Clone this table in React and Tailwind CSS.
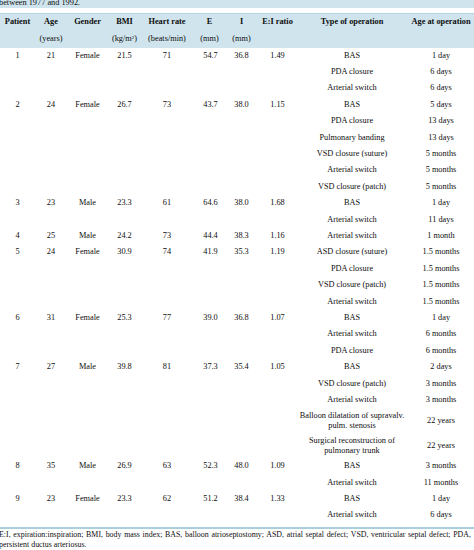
const patients = [
  { id: "1", age: "21", gender: "Female", bmi: "21.5", hr: "71", e: "54.7", i: "36.8", ratio: "1.49",
    ops: [["BAS", "1 day"], ["PDA closure", "6 days"], ["Arterial switch", "6 days"]] },
  { id: "2", age: "24", gender: "Female", bmi: "26.7", hr: "73", e: "43.7", i: "38.0", ratio: "1.15",
    ops: [["BAS", "5 days"], ["PDA closure", "13 days"], ["Pulmonary banding", "13 days"],
      ["VSD closure (suture)", "5 months"], ["Arterial switch", "5 months"], ["VSD closure (patch)", "5 months"]] },
  { id: "3", age: "23", gender: "Male", bmi: "23.3", hr: "61", e: "64.6", i: "38.0", ratio: "1.68",
    ops: [["BAS", "1 day"], ["Arterial switch", "11 days"]] },
  { id: "4", age: "25", gender: "Male", bmi: "24.2", hr: "73", e: "44.4", i: "38.3", ratio: "1.16",
    ops: [["Arterial switch", "1 month"]] },
  { id: "5", age: "24", gender: "Female", bmi: "30.9", hr: "74", e: "41.9", i: "35.3", ratio: "1.19",
    ops: [["ASD closure (suture)", "1.5 months"], ["PDA closure", "1.5 months"],
      ["VSD closure (patch)", "1.5 months"], ["Arterial switch", "1.5 months"]] },
  { id: "6", age: "31", gender: "Female", bmi: "25.3", hr: "77", e: "39.0", i: "36.8", ratio: "1.07",
    ops: [["BAS", "1 day"], ["Arterial switch", "6 months"], ["PDA closure", "6 months"]] },
  { id: "7", age: "27", gender: "Male", bmi: "39.8", hr: "81", e: "37.3", i: "35.4", ratio: "1.05",
    ops: [["BAS", "2 days"], ["VSD closure (patch)", "3 months"], ["Arterial switch", "3 months"],
      [["Balloon dilatation of supravalv.", "pulm. stenosis"], "22 years"],
      [["Surgical reconstruction of", "pulmonary trunk"], "22 years"]] },
  { id: "8", age: "35", gender: "Male", bmi: "26.9", hr: "63", e: "52.3", i: "48.0", ratio: "1.09",
    ops: [["BAS", "3 months"], ["Arterial switch", "11 months"]] },
  { id: "9", age: "23", gender: "Female", bmi: "23.3", hr: "62", e: "51.2", i: "38.4", ratio: "1.33",
    ops: [["BAS", "1 day"], ["Arterial switch", "6 days"]] },
];

const cell = "p-0 text-center align-middle whitespace-nowrap";

export default function App() {
  const rows = [];
  patients.forEach((p) => {
    p.ops.forEach(([op, when], k) => {
      const first = k === 0;
      const tall = Array.isArray(op);
      rows.push(
        <tr key={p.id + "-" + k} className={tall ? "h-[25px]" : "h-[16.4px]"}>
          <td className={cell}>{first ? p.id : ""}</td>
          <td className={cell}>{first ? p.age : ""}</td>
          <td className={cell}>{first ? p.gender : ""}</td>
          <td className={cell}>{first ? p.bmi : ""}</td>
          <td className={cell}>{first ? p.hr : ""}</td>
          <td className={`${cell} pl-[4px]`}>{first ? p.e : ""}</td>
          <td className={cell}>{first ? p.i : ""}</td>
          <td className={cell}>{first ? p.ratio : ""}</td>
          <td className={cell}>
            {tall ? (
              <>
                {op[0]}
                <br />
                {op[1]}
              </>
            ) : (
              op
            )}
          </td>
          <td className={cell}>{when}</td>
        </tr>
      );
    });
  });

  return (
    <div className="w-[474px] h-[550px] overflow-hidden bg-white text-[#0e0e0e] text-[8.3px] leading-[10px] font-['Liberation_Serif','Times_New_Roman',serif]">
      <div className="h-[8px] bg-[#cfe4ed] overflow-hidden flex items-end">
        <div className="-ml-px leading-[10px] whitespace-nowrap">between 1977 and 1992.</div>
      </div>
      <div className="h-[5px]" />
      <table className="w-[474px] table-fixed border-collapse">
        <colgroup>
          <col className="w-[35px]" />
          <col className="w-[32px]" />
          <col className="w-[41px]" />
          <col className="w-[33px]" />
          <col className="w-[52px]" />
          <col className="w-[31px]" />
          <col className="w-[35px]" />
          <col className="w-[37px]" />
          <col className="w-[112px]" />
          <col className="w-[66px]" />
        </colgroup>
        <thead className="bg-[#cfe4ed]">
          <tr className="h-[17px] border-t border-[#b3d4e1] font-bold">
            <th className={cell}>Patient</th>
            <th className={cell}>Age</th>
            <th className={cell}>Gender</th>
            <th className={cell}>BMI</th>
            <th className={cell}>Heart rate</th>
            <th className={`${cell} pl-[2px]`}>E</th>
            <th className={cell}>I</th>
            <th className={cell}>E:I ratio</th>
            <th className={cell}>Type of operation</th>
            <th className={cell}>Age at operation</th>
          </tr>
          <tr className="h-[17px] font-normal">
            <td className={cell}></td>
            <td className={cell}>(years)</td>
            <td className={cell}></td>
            <td className={cell}>
              (kg/m<sup className="text-[5px]">2</sup>)
            </td>
            <td className={cell}>(beats/min)</td>
            <td className={`${cell} pl-[2px]`}>(mm)</td>
            <td className={cell}>(mm)</td>
            <td className={cell}></td>
            <td className={cell}></td>
            <td className={cell}></td>
          </tr>
        </thead>
        <tbody>{rows}</tbody>
      </table>
      <div className="h-[3px]" />
      <div className="h-[2px] bg-[#a9cfdd]" />
      <p className="-ml-px mt-[1px] w-[472px] text-justify text-[7.9px] leading-[10.5px]">
        E:I, expiration:inspiration; BMI, body mass index; BAS, balloon atrioseptostomy; ASD, atrial septal
        defect; VSD, ventricular septal defect; PDA, persistent ductus arteriosus.
      </p>
    </div>
  );
}
